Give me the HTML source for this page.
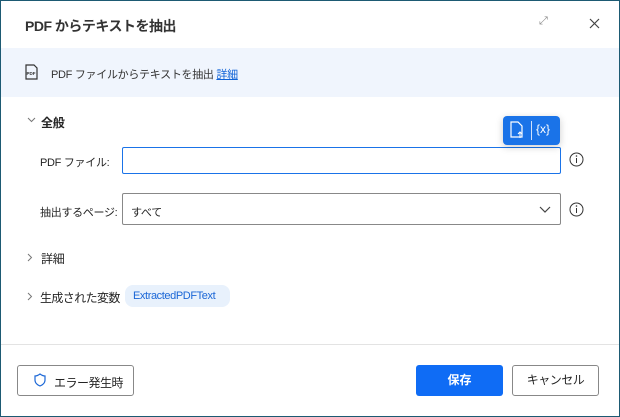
<!DOCTYPE html>
<html><head><meta charset="utf-8"><style>
*{margin:0;padding:0;box-sizing:border-box}
body{width:620px;height:417px;overflow:hidden;background:#fff;font-family:"Liberation Sans","Noto Sans CJK JP",sans-serif;color:#242424;position:relative}
.frame{position:absolute;inset:0;border:1px solid #1d5a73}
.a{position:absolute}
.t{font-size:11px;letter-spacing:-0.3px}
</style></head><body>
<div class="frame"></div>
<div class="a" style="left:25px;top:16px;font-size:14px;font-weight:bold;color:#333;letter-spacing:-0.5px">PDF からテキストを抽出</div>
<div class="a" style="left:539px;top:15px;font-size:11px;color:#888">⤢</div>
<svg class="a" style="left:589px;top:18px" width="11" height="11"><path d="M1 1L10 10M10 1L1 10" stroke="#444" stroke-width="1.2"/></svg>
<div class="a" style="left:1px;top:48px;width:618px;height:49px;background:#f0f5fd"></div>
<svg class="a" style="left:24px;top:64px" width="15" height="16"><path d="M2 1h8l3 3v11H2z" fill="none" stroke="#333" stroke-width="1.2"/><text x="2.5" y="11" font-size="4.5" font-family="Liberation Sans" font-weight="bold" fill="#333">PDF</text></svg>
<div class="a t" style="left:51px;top:66px;color:#333">PDF ファイルからテキストを抽出 <span style="color:#0f62d6;text-decoration:underline">詳細</span></div>
<svg class="a" style="left:27px;top:117px" width="9" height="6"><path d="M1 1l3.5 3.5L8 1" fill="none" stroke="#777"/></svg>
<div class="a t" style="left:41px;top:114px;font-weight:bold;font-size:12px">全般</div>
<div class="a t" style="left:40px;top:154px">PDF ファイル:</div>
<div class="a" style="left:122px;top:147px;width:439px;height:27px;border:1px solid #1a73e8;border-radius:2px"></div>
<div class="a" style="left:503px;top:116px;width:57px;height:29px;background:#1a73e8;border-radius:4px;box-shadow:0 2px 8px rgba(0,0,0,.2)"></div>
<svg class="a" style="left:509px;top:121px" width="16" height="18"><path d="M2 1h7l4 4v11H2z" fill="none" stroke="#fff" stroke-width="1.2"/><path d="M11 17v-6M9 13l2-2 2 2" fill="none" stroke="#fff"/></svg>
<div class="a" style="left:531px;top:121px;width:1px;height:19px;background:#cfe0fb"></div>
<div class="a" style="left:536px;top:122px;font-size:12px;color:#fff">{x}</div>
<svg class="a" style="left:569px;top:152px" width="15" height="15"><circle cx="7.5" cy="7.5" r="6.5" fill="none" stroke="#333"/><path d="M7.5 6v5" stroke="#333"/><circle cx="7.5" cy="4" r=".8" fill="#333"/></svg>
<div class="a t" style="left:40px;top:204px">抽出するページ:</div>
<div class="a" style="left:122px;top:193px;width:439px;height:32px;border:1px solid #888;border-radius:2px"></div>
<div class="a t" style="left:131px;top:204px">すべて</div>
<svg class="a" style="left:539px;top:206px" width="12" height="7"><path d="M1 1l5 5 5-5" fill="none" stroke="#444" stroke-width="1.2"/></svg>
<svg class="a" style="left:569px;top:202px" width="15" height="15"><circle cx="7.5" cy="7.5" r="6.5" fill="none" stroke="#333"/><path d="M7.5 6v5" stroke="#333"/><circle cx="7.5" cy="4" r=".8" fill="#333"/></svg>
<svg class="a" style="left:27px;top:253px" width="6" height="9"><path d="M1 1l3.5 3.5L1 8" fill="none" stroke="#777"/></svg>
<div class="a t" style="left:41px;top:250px;font-size:12px">詳細</div>
<svg class="a" style="left:27px;top:292px" width="6" height="9"><path d="M1 1l3.5 3.5L1 8" fill="none" stroke="#777"/></svg>
<div class="a t" style="left:40px;top:289px;font-size:12px;letter-spacing:-0.6px">生成された変数</div>
<div class="a" style="left:125px;top:285px;width:105px;height:22px;background:#e8f1fc;border-radius:8px;color:#1a66d6;font-size:11px;letter-spacing:-0.4px;padding:5px 0 0 8px">ExtractedPDFText</div>
<div class="a" style="left:1px;top:344px;width:618px;height:1px;background:#e3e3e3"></div>
<div class="a" style="left:17px;top:365px;width:117px;height:31px;border:1px solid #888;border-radius:3px"></div>
<svg class="a" style="left:34px;top:373px" width="12" height="14"><path d="M6 1C4 2.5 2.5 3 1 3v4c0 3 2.5 5 5 6 2.5-1 5-3 5-6V3C9.5 3 8 2.5 6 1z" fill="none" stroke="#1a66d6" stroke-width="1.2"/></svg>
<div class="a t" style="left:54px;top:374px;font-size:12px;letter-spacing:-0.5px">エラー発生時</div>
<div class="a" style="left:416px;top:365px;width:87px;height:31px;background:#0f6cf5;border-radius:3px;color:#fff;font-size:12px;font-weight:bold;text-align:center;line-height:31px">保存</div>
<div class="a" style="left:512px;top:365px;width:87px;height:31px;border:1px solid #888;border-radius:3px;font-size:12px;letter-spacing:-0.5px;text-align:center;line-height:29px">キャンセル</div>
</body></html>
